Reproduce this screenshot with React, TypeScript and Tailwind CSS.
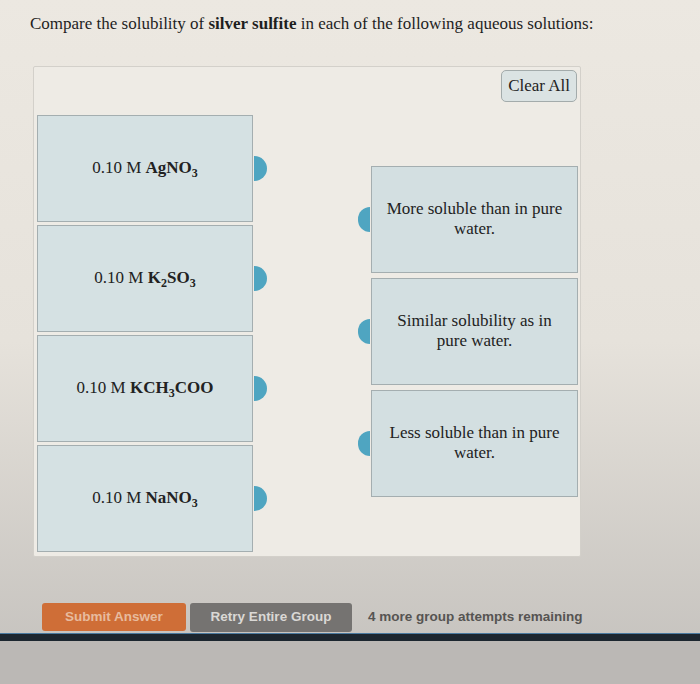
const serif = { fontFamily: '"Liberation Serif", "Times New Roman", serif' }

function Formula({ prefix, parts }: { prefix: string; parts: (string | [string])[] }) {
  return (
    <span>
      {prefix}{' '}
      <b>
        {parts.map((p, i) =>
          typeof p === 'string' ? <span key={i}>{p}</span> : <span key={i} className="text-[12px] relative top-[4px]">{p[0]}</span>
        )}
      </b>
    </span>
  )
}

const solutions = [
  { prefix: '0.10 M', parts: ['AgNO', ['3']] as (string | [string])[] },
  { prefix: '0.10 M', parts: ['K', ['2'], 'SO', ['3']] as (string | [string])[] },
  { prefix: '0.10 M', parts: ['KCH', ['3'], 'COO'] as (string | [string])[] },
  { prefix: '0.10 M', parts: ['NaNO', ['3']] as (string | [string])[] },
]

const answers = ['More soluble than in pure water.', 'Similar solubility as in pure water.', 'Less soluble than in pure water.']

export default function App() {
  return (
    <div className="w-[700px] h-[684px] flex flex-col bg-linear-to-b from-[#ece8e1] via-[#e6e2db] to-[#c3c0bc] overflow-hidden">
      <p className="pl-[30px] pt-[11px] text-[17px] text-[#1e1e1e]" style={serif}>
        Compare the solubility of <b>silver sulfite</b> in each of the following aqueous solutions:
      </p>

      {/* Drag-and-drop panel */}
      <div className="ml-[33px] mt-[29px] w-[548px] h-[491px] border border-[#d3d0ca] bg-[#eeebe5] rounded-[2px] flex flex-col">
        <div className="flex justify-end pt-[3px] pr-[3px]">
          <button
            className="h-[32px] px-[6px] rounded-[5px] border border-[#a3abab] bg-[#dbe3e3] text-[17px] text-[#222]"
            style={serif}
          >
            Clear All
          </button>
        </div>

        <div className="flex mt-[13px] pl-[3px]">
          <div className="flex flex-col gap-[3px]">
            {solutions.map((s, i) => (
              <div key={i} className="flex items-center">
                <div
                  className="w-[216px] h-[107px] border border-[#a4aeb0] bg-[#d5e1e3] flex items-center justify-center text-[17px] text-[#222]"
                  style={serif}
                >
                  <Formula prefix={s.prefix} parts={s.parts} />
                </div>
                <div className="ml-[1px] w-[13px] h-[25px] rounded-r-full bg-[#4fa5c1]" />
              </div>
            ))}
          </div>

          <div className="ml-[91px] mt-[51px] flex flex-col gap-[5px]">
            {answers.map((a, i) => (
              <div key={i} className="flex items-center">
                <div className="mr-[1px] w-[12px] h-[25px] rounded-l-full bg-[#4fa5c1]" />
                <div
                  className="w-[207px] h-[107px] border border-[#a4aeb0] bg-[#d3dfe1] flex items-center justify-center text-center px-[12px] text-[17px] leading-[20px] text-[#222]"
                  style={serif}
                >
                  {a}
                </div>
              </div>
            ))}
          </div>
        </div>
      </div>

      {/* Actions */}
      <div className="flex items-center mt-[46px] pl-[42px]" style={{ fontFamily: '"Liberation Sans", Arial, sans-serif' }}>
        <button className="w-[144px] h-[28px] rounded-[3px] bg-[#cf6e37] text-[#e7bb9e] text-[13.5px] font-bold">
          Submit Answer
        </button>
        <button className="ml-[4px] w-[162px] h-[29px] rounded-[3px] bg-[#757371] text-[#dad8d5] text-[13.5px] font-bold">
          Retry Entire Group
        </button>
        <span className="ml-[16px] text-[13.5px] font-bold text-[#565452]">4 more group attempts remaining</span>
      </div>

      <div className="mt-[1px] h-[1px] bg-[#4a7aa0]" />
      <div className="h-[7px] bg-[#1c262f]" />
      <div className="flex-1 bg-[#bbb8b5]" />
    </div>
  )
}
